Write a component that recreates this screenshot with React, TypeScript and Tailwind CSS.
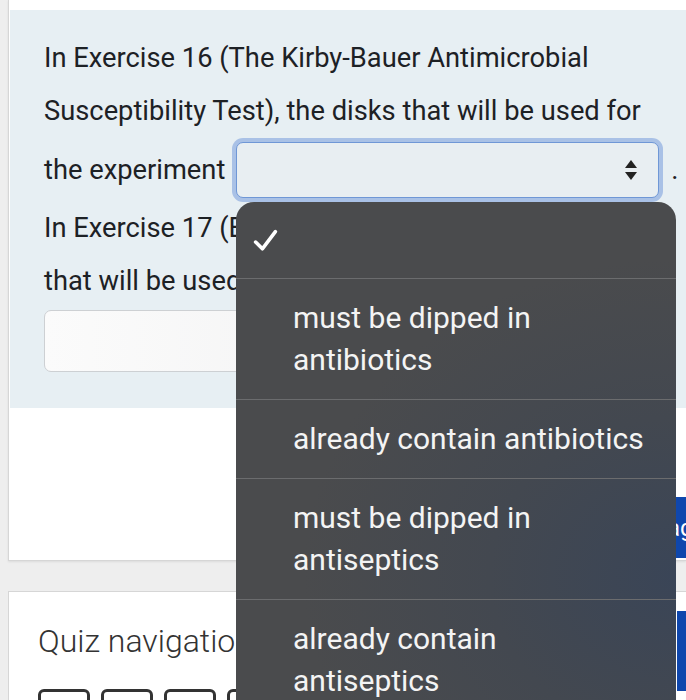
import React from 'react';

const options = [
  { label: '', checked: true },
  { label: 'must be dipped in\nantibiotics' },
  { label: 'already contain antibiotics' },
  { label: 'must be dipped in\nantiseptics' },
  { label: 'already contain\nantiseptics' },
];

function SortArrows() {
  return (
    <svg width="14" height="22" viewBox="0 0 14 22" className="shrink-0">
      <path d="M7 1 L13 9 H1 Z" fill="#222" />
      <path d="M7 21 L13 13 H1 Z" fill="#222" />
    </svg>
  );
}

function Check() {
  return (
    <svg width="25" height="25" viewBox="0 0 24 24" fill="none">
      <path d="M2.5 13.5 L9 20 L21.5 3.5" stroke="#fff" strokeWidth="3.4" strokeLinecap="round" strokeLinejoin="round" />
    </svg>
  );
}

function Dropdown() {
  return (
    <div className="absolute left-[236px] top-[202px] w-[440px] h-[520px] rounded-t-[18px] overflow-hidden bg-[radial-gradient(ellipse_at_100%_72%,#3a4557_0%,#434850_30%,#4a4b4d_60%)] text-[#f4f4f4]">
      {options.map((o, i) => (
        <div
          key={i}
          className={`flex items-center ${i > 0 ? 'border-t border-[#6b6c6e]' : ''} ${o.checked ? 'h-[76px]' : 'py-[18px]'}`}
        >
          <div className="w-[57px] shrink-0 flex justify-center pl-[2px]">{o.checked && <Check />}</div>
          <div className="text-[30px] leading-[42px] whitespace-pre-line">{o.label}</div>
        </div>
      ))}
    </div>
  );
}

export default function App() {
  return (
    <div className="relative w-[686px] h-[700px] overflow-hidden bg-[#eeeeee] font-['Roboto',sans-serif]">
      {/* question card */}
      <div className="ml-[8px] bg-white border-l border-b border-[#d6d6d6] pl-px pt-[10px] shadow-[0_1px_2px_rgba(0,0,0,0.08)]">
        <div className="bg-[#e7eff3] pl-[34px] pt-[22px] pb-[36px] text-[#1d2125] text-[27.3px]">
          <div className="leading-[53px]">
            In Exercise 16 (The Kirby-Bauer Antimicrobial
            <br />
            Susceptibility Test), the disks that will be used for
          </div>
          <div className="flex items-center h-[64px]">
            <span>the experiment</span>
            <div className="ml-[11px] w-[423px] h-[56px] shrink-0 rounded-[7px] border-[1.5px] border-[#6f97d6] shadow-[0_0_0_4px_#a9c1e6] bg-[#e8eef2] flex items-center justify-end pr-[20px]">
              <SortArrows />
            </div>
            <span className="ml-[12px]">.</span>
          </div>
          <div className="leading-[53px]">
            In Exercise 17 (Enzyme Activity), the media
            <br />
            that will be used for the experiment
          </div>
          <div className="mt-[2px] w-[430px] h-[62px] rounded-[7px] border-[1.5px] border-[#cdd0d3] bg-[linear-gradient(90deg,#fbfbfb,#f1f1f2)]" />
        </div>
        <div className="h-[152px] flex items-end pb-[2px] pl-[574px]">
          <button className="shrink-0 h-[61px] px-[14px] bg-[#0f47ad] text-white text-[24px] rounded-[4px]">Next page</button>
        </div>
      </div>

      {/* quiz navigation card */}
      <div className="mt-[30px] ml-[8px] bg-white border-l border-t border-[#d6d6d6] flex items-start">
        <div className="w-[668px] shrink-0 pl-[29px] pt-[28px]">
          <h3 className="text-[32px] leading-[42px] text-[#333] font-light">Quiz navigation</h3>
          <div className="mt-[27px] flex gap-[11px]">
            {[1, 2, 3, 4, 5, 6].map((n) => (
              <div key={n} className="w-[52px] h-[60px] shrink-0 rounded-[6px] border-[3px] border-[#333] text-[20px] leading-[20px] text-[#333] text-center pt-[8px]">
                {n}
              </div>
            ))}
          </div>
        </div>
        <div className="mt-[19px] w-[60px] h-[80px] shrink-0 bg-[#0f47ad]" />
      </div>

      <Dropdown />
    </div>
  );
}
